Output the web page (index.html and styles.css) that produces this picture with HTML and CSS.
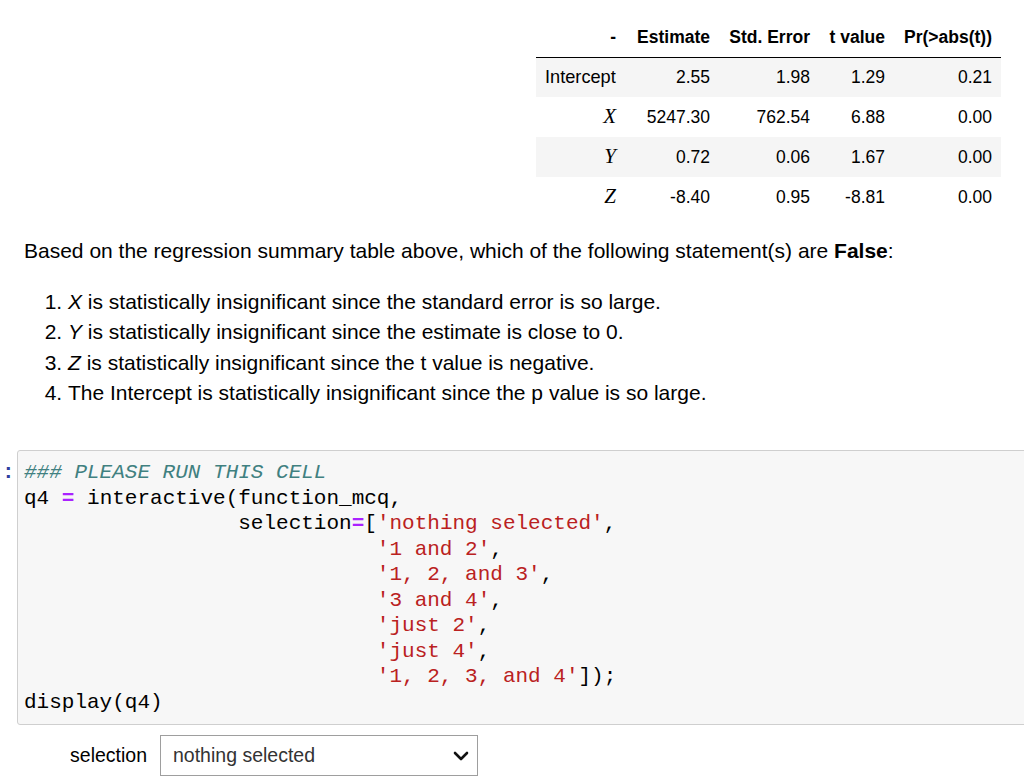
FILE: index.html
```html
<!DOCTYPE html>
<html>
<head>
<meta charset="utf-8">
<link rel="stylesheet" href="styles.css">
</head>
<body>
<div class="md">
  <table class="reg">
    <colgroup><col class="c0"><col class="c1"><col class="c2"><col class="c3"><col class="c4"></colgroup>
    <thead>
      <tr><th>-</th><th>Estimate</th><th>Std. Error</th><th>t value</th><th>Pr(&gt;abs(t))</th></tr>
    </thead>
    <tbody>
      <tr><td class="lbl">Intercept</td><td>2.55</td><td>1.98</td><td>1.29</td><td>0.21</td></tr>
      <tr><td><span class="math">X</span></td><td>5247.30</td><td>762.54</td><td>6.88</td><td>0.00</td></tr>
      <tr><td><span class="math">Y</span></td><td>0.72</td><td>0.06</td><td>1.67</td><td>0.00</td></tr>
      <tr><td><span class="math">Z</span></td><td>-8.40</td><td>0.95</td><td>-8.81</td><td>0.00</td></tr>
    </tbody>
  </table>
  <p class="question">Based on the regression summary table above, which of the following statement(s) are <strong>False</strong>:</p>
  <ol class="options">
    <li><em>X</em> is statistically insignificant since the standard error is so large.</li>
    <li><em>Y</em> is statistically insignificant since the estimate is close to 0.</li>
    <li><em>Z</em> is statistically insignificant since the t value is negative.</li>
    <li>The Intercept is statistically insignificant since the p value is so large.</li>
  </ol>
</div>
<div class="cell">
  <div class="prompt">:</div>
  <div class="input"><pre class="code"><span class="cm">### PLEASE RUN THIS CELL</span>
q4 <span class="op">=</span> interactive(function_mcq,
                 selection<span class="op">=</span>[<span class="s">'nothing selected'</span>,
                            <span class="s">'1 and 2'</span>,
                            <span class="s">'1, 2, and 3'</span>,
                            <span class="s">'3 and 4'</span>,
                            <span class="s">'just 2'</span>,
                            <span class="s">'just 4'</span>,
                            <span class="s">'1, 2, 3, and 4'</span>]);
display(q4)</pre></div>
</div>
<div class="widget">
  <label class="wlabel">selection</label>
  <div class="dropdown">
    <span class="dtext">nothing selected</span>
    <svg class="chev" width="16" height="10" viewBox="0 0 16 10"><polyline points="2,2 8,8 14,2" fill="none" stroke="#111" stroke-width="2.6" stroke-linecap="round" stroke-linejoin="round"/></svg>
  </div>
</div>
</body>
</html>
```
FILE: styles.css
```css
html, body {
  margin: 0;
  padding: 0;
  background: #fff;
  overflow: hidden;
}
body {
  font-family: "Liberation Sans", Arial, Helvetica, sans-serif;
  color: #000;
  width: 1024px;
}
.md {
  padding-top: 18px;
  padding-left: 24px;
}
.reg {
  margin-left: 512px;
  border-collapse: collapse;
  table-layout: fixed;
  width: 465px;
  font-size: 17.5px;
  line-height: 21px;
}
.reg .c0 { width: 89px; }
.reg .c1 { width: 94px; }
.reg .c2 { width: 100px; }
.reg .c3 { width: 75px; }
.reg .c4 { width: 107px; }
.reg th, .reg td {
  padding: 9px 9px;
  text-align: right;
  white-space: nowrap;
}
.reg th {
  font-weight: bold;
}
.reg thead tr {
  border-bottom: 1px solid #000;
}
.reg tbody tr:nth-child(odd) {
  background: #f5f5f5;
}
.reg td.lbl {
  text-align: left;
  font-size: 18.2px;
}
.math {
  font-family: "Liberation Serif", "Times New Roman", serif;
  font-style: italic;
  font-size: 21px;
}
.question {
  margin: 19px 0 21px 0;
  font-size: 21px;
  line-height: 30px;
}
.options {
  margin: 0;
  padding-left: 44px;
  font-size: 21px;
  line-height: 30.3px;
}
.options li {
  padding-left: 0;
}
.cell {
  display: flex;
  margin-top: 42px;
}
.prompt {
  width: 17px;
  padding-top: 10px;
  box-sizing: border-box;
  padding-left: 2px;
  font-family: "Liberation Mono", monospace;
  font-size: 21px;
  line-height: 25.5px;
  color: #303f9f;
  font-weight: bold;
}
.input {
  flex: 1;
  margin-right: -20px;
  background: #f7f7f7;
  border: 1px solid #cfcfcf;
  border-radius: 3px;
  padding: 9px 6px 9px 6px;
}
.code {
  margin: 0;
  font-family: "Liberation Mono", "Courier New", monospace;
  font-size: 21px;
  line-height: 25.5px;
  color: #000;
}
.cm {
  color: #408080;
  font-style: italic;
}
.op {
  color: #aa22ff;
  font-weight: bold;
}
.s {
  color: #ba2121;
}
.widget {
  display: flex;
  align-items: center;
  margin-top: 10px;
  padding-left: 29px;
}
.wlabel {
  width: 131px;
  padding-right: 13px;
  box-sizing: border-box;
  text-align: right;
  font-size: 19.5px;
  color: #000;
}
.dropdown {
  width: 318px;
  height: 41px;
  box-sizing: border-box;
  border: 1px solid #9e9e9e;
  background: #fff;
  display: flex;
  align-items: center;
  justify-content: space-between;
  padding: 0 8px 0 12px;
}
.dtext {
  font-size: 19.5px;
  color: #333;
}
.chev {
  display: block;
}
```
